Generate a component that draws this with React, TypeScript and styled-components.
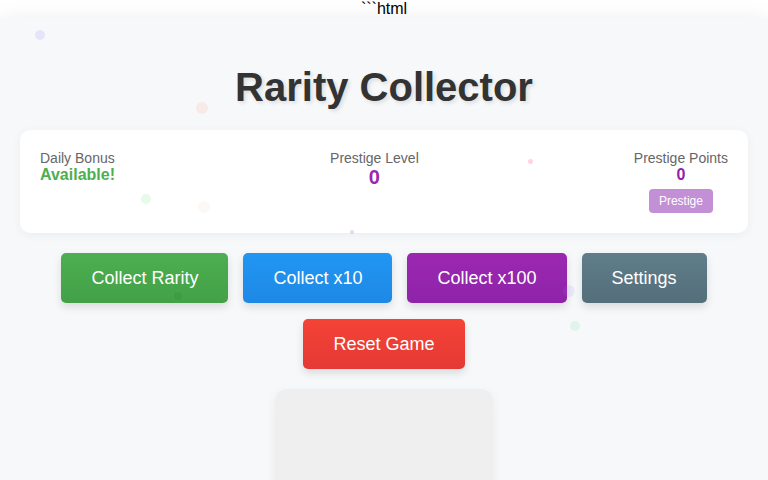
import React from "react";
import styled, { createGlobalStyle } from "styled-components";

const Global = createGlobalStyle`
  html, body {
    margin: 0;
    padding: 0;
    background: #ffffff;
    font-family: "Liberation Sans", Arial, sans-serif;
    text-align: center;
    overflow: hidden;
  }
  #root { height: 480px; }
`;

const Fence = styled.div`
  font-size: 16px;
  line-height: 18px;
  color: #000;
  height: 18px;
`;

const Page = styled.div`
  position: relative;
  background: #f7f8fa;
  box-shadow: 0 0 20px rgba(0, 0, 0, 0.07);
  padding: 20px;
  height: 462px;
  box-sizing: border-box;
  overflow: hidden;
`;

const Title = styled.h1`
  margin: 26px 0 20px;
  font-size: 40px;
  line-height: 46px;
  font-weight: 700;
  color: #333;
  text-shadow: 2px 2px 4px rgba(0, 0, 0, 0.12);
`;

const StatsCard = styled.div`
  background: #fff;
  border-radius: 10px;
  box-shadow: 0 2px 10px rgba(0, 0, 0, 0.05);
  padding: 20px;
  display: flex;
  justify-content: space-between;
  align-items: flex-start;
  margin-bottom: 20px;
`;

const Stat = styled.div<{ $align: string }>`
  display: flex;
  flex-direction: column;
  align-items: ${(p) => p.$align};
`;

const Label = styled.div`
  font-size: 14px;
  line-height: 16px;
  color: #666;
`;

const Value = styled.div<{ $color: string; $size: number }>`
  font-size: ${(p) => p.$size}px;
  line-height: ${(p) => Math.round(p.$size * 1.15)}px;
  font-weight: 700;
  color: ${(p) => p.$color};
`;

const SmallButton = styled.button`
  margin-top: 5px;
  border: none;
  border-radius: 4px;
  background: #c38fd5;
  color: #fff;
  font-family: "Liberation Sans", Arial, sans-serif;
  font-size: 12px;
  line-height: 14px;
  padding: 5px 10px;
`;

const ButtonRow = styled.div`
  display: flex;
  flex-wrap: wrap;
  justify-content: center;
  gap: 16px 15px;
  padding: 0 20px;
  margin-bottom: 20px;
`;

const gradients: Record<string, string> = {
  green: "linear-gradient(180deg, #4caf50, #43a047)",
  blue: "linear-gradient(180deg, #2196f3, #1e88e5)",
  purple: "linear-gradient(180deg, #9c27b0, #8e24aa)",
  gray: "linear-gradient(180deg, #607d8b, #546e7a)",
  red: "linear-gradient(180deg, #f44336, #e53935)",
};

const ActionButton = styled.button<{ $tone: string }>`
  border: none;
  border-radius: 5px;
  background: ${(p) => gradients[p.$tone]};
  color: #fff;
  font-family: "Liberation Sans", Arial, sans-serif;
  font-size: 18px;
  line-height: 20px;
  padding: 15px 30px;
  box-shadow: 0 4px 8px rgba(0, 0, 0, 0.12);
`;

const Display = styled.div`
  width: 218px;
  height: 200px;
  margin: 0 auto;
  background: #efefef;
  border-radius: 12px;
  box-shadow: 0 4px 12px rgba(0, 0, 0, 0.06);
`;

const Particle = styled.div<{ $c: string; $s: number }>`
  position: absolute;
  width: ${(p) => p.$s}px;
  height: ${(p) => p.$s}px;
  border-radius: 50%;
  background: ${(p) => p.$c};
  pointer-events: none;
`;

const particles = [
  { x: 35, y: 12, s: 10, c: "rgba(120,120,255,0.15)" },
  { x: 196, y: 84, s: 12, c: "rgba(255,140,100,0.12)" },
  { x: 141, y: 176, s: 10, c: "rgba(100,220,100,0.15)" },
  { x: 198, y: 183, s: 12, c: "rgba(230,200,180,0.12)" },
  { x: 528, y: 141, s: 5, c: "rgba(255,80,140,0.25)" },
  { x: 350, y: 212, s: 4, c: "rgba(150,100,200,0.25)" },
  { x: 570, y: 303, s: 10, c: "rgba(100,220,150,0.15)" },
  { x: 174, y: 274, s: 8, c: "rgba(40,120,40,0.15)" },
  { x: 563, y: 267, s: 12, c: "rgba(160,120,255,0.12)" },
];

export default function App() {
  return (
    <>
      <Global />
      <Fence>```html</Fence>
      <Page>
        {particles.map((p, i) => (
          <Particle key={i} $c={p.c} $s={p.s} style={{ left: p.x, top: p.y }} />
        ))}
        <Title>Rarity Collector</Title>
        <StatsCard>
          <Stat $align="flex-start">
            <Label>Daily Bonus</Label>
            <Value $color="#4caf50" $size={16}>Available!</Value>
          </Stat>
          <Stat $align="center">
            <Label>Prestige Level</Label>
            <Value $color="#9c27b0" $size={20}>0</Value>
          </Stat>
          <Stat $align="center">
            <Label>Prestige Points</Label>
            <Value $color="#8e24aa" $size={16}>0</Value>
            <SmallButton>Prestige</SmallButton>
          </Stat>
        </StatsCard>
        <ButtonRow>
          <ActionButton $tone="green">Collect Rarity</ActionButton>
          <ActionButton $tone="blue">Collect x10</ActionButton>
          <ActionButton $tone="purple">Collect x100</ActionButton>
          <ActionButton $tone="gray">Settings</ActionButton>
          <ActionButton $tone="red">Reset Game</ActionButton>
        </ButtonRow>
        <Display />
      </Page>
    </>
  );
}
